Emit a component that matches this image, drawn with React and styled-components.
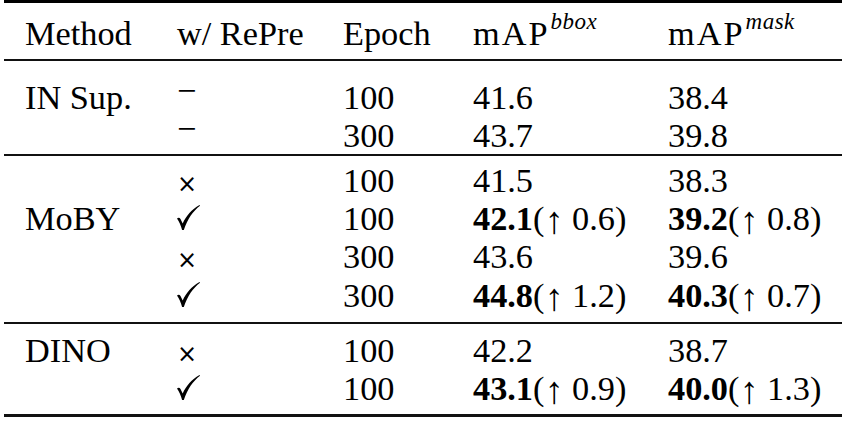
import React from "react";
import styled, { createGlobalStyle } from "styled-components";

const GlobalStyle = createGlobalStyle`
  html, body {
    margin: 0;
    padding: 0;
    background: #fff;
  }
  body {
    font-family: "Liberation Serif", "Times New Roman", serif;
    color: #000;
  }
`;

const Table = styled.div`
  margin-left: 4px;
  width: 838px;
  font-size: 34.3px;
`;

const Section = styled.div`
  padding-top: ${(p) => p.$padTop}px;
  padding-bottom: ${(p) => p.$padBottom}px;
  border-top: ${(p) => (p.$top ? "3px solid #000" : "none")};
  border-bottom: ${(p) => p.$rule}px solid #111;
`;

const Row = styled.div`
  display: grid;
  grid-template-columns: 173px 166px 130px 195px 1fr;
  height: 38.3px;
  line-height: 38.3px;
  white-space: nowrap;
`;

const Cell = styled.div`
  padding-left: ${(p) => (p.$first ? 21 : 0)}px;
`;

const Metric = styled.span`
  letter-spacing: 2px;
`;

const Sup = styled.span`
  font-style: italic;
  font-size: 23px;
  letter-spacing: 0.5px;
  vertical-align: 16px;
  line-height: 0;
  margin-left: 1px;
`;

const Dash = styled.span`
  display: inline-block;
  line-height: 0;
  vertical-align: 7px;
`;

const Cross = styled.span`
  font-family: "DejaVu Sans", sans-serif;
  font-size: 24px;
  line-height: 0;
`;

const Check = styled.svg`
  width: 23px;
  height: 25px;
  vertical-align: 0;
`;

const Arrow = styled.span`
  font-size: 38px;
  line-height: 0;
  vertical-align: -3px;
`;

const Best = styled.b`
  font-weight: bold;
`;

const groups = [
  {
    name: "IN Sup.",
    padTop: 16.3,
    padBottom: 0,
    rule: 2,
    nameRow: 0,
    rows: [
      ["dash", "100", "41.6", "38.4"],
      ["dash", "300", "43.7", "39.8"],
    ],
  },
  {
    name: "MoBY",
    padTop: 4.5,
    padBottom: 7.8,
    rule: 2,
    nameRow: 1,
    rows: [
      ["no", "100", "41.5", "38.3"],
      ["yes", "100", ["42.1", "0.6"], ["39.2", "0.8"]],
      ["no", "300", "43.6", "39.6"],
      ["yes", "300", ["44.8", "1.2"], ["40.3", "0.7"]],
    ],
  },
  {
    name: "DINO",
    padTop: 7,
    padBottom: 6.4,
    rule: 3,
    nameRow: 0,
    rows: [
      ["no", "100", "42.2", "38.7"],
      ["yes", "100", ["43.1", "0.9"], ["40.0", "1.3"]],
    ],
  },
];

function Flag({ kind }) {
  if (kind === "dash") return <Dash>−</Dash>;
  if (kind === "yes")
    return (
      <Check viewBox="0 0 23 25">
        <path
          d="M0,13.6 C1.4,12.4 2.7,12.7 3.5,14.1 L5.7,18.4 C9.2,10.8 14.6,4.4 22.5,0 L23,0.7 C16.2,6 10.6,13.6 6.8,25 L5.1,25 C3.9,20.6 2.2,16.6 0,13.6 Z"
          fill="#000"
        />
      </Check>
    );
  return <Cross>×</Cross>;
}

function Score({ value }) {
  if (!Array.isArray(value)) return value;
  return (
    <>
      <Best>{value[0]}</Best>(<Arrow>↑</Arrow> {value[1]})
    </>
  );
}

export default function App() {
  return (
    <>
      <GlobalStyle />
      <Table>
        <Section $top $padTop={10.8} $padBottom={7.4} $rule={2}>
          <Row>
            <Cell $first>Method</Cell>
            <Cell>w/ RePre</Cell>
            <Cell>Epoch</Cell>
            <Cell>
              <Metric>mAP</Metric>
              <Sup>bbox</Sup>
            </Cell>
            <Cell>
              <Metric>mAP</Metric>
              <Sup>mask</Sup>
            </Cell>
          </Row>
        </Section>
        {groups.map((g) => (
          <Section
            key={g.name}
            $padTop={g.padTop}
            $padBottom={g.padBottom}
            $rule={g.rule}
          >
            {g.rows.map((r, i) => (
              <Row key={i}>
                <Cell $first>{i === g.nameRow ? g.name : ""}</Cell>
                <Cell>
                  <Flag kind={r[0]} />
                </Cell>
                <Cell>{r[1]}</Cell>
                <Cell>
                  <Score value={r[2]} />
                </Cell>
                <Cell>
                  <Score value={r[3]} />
                </Cell>
              </Row>
            ))}
          </Section>
        ))}
      </Table>
    </>
  );
}
